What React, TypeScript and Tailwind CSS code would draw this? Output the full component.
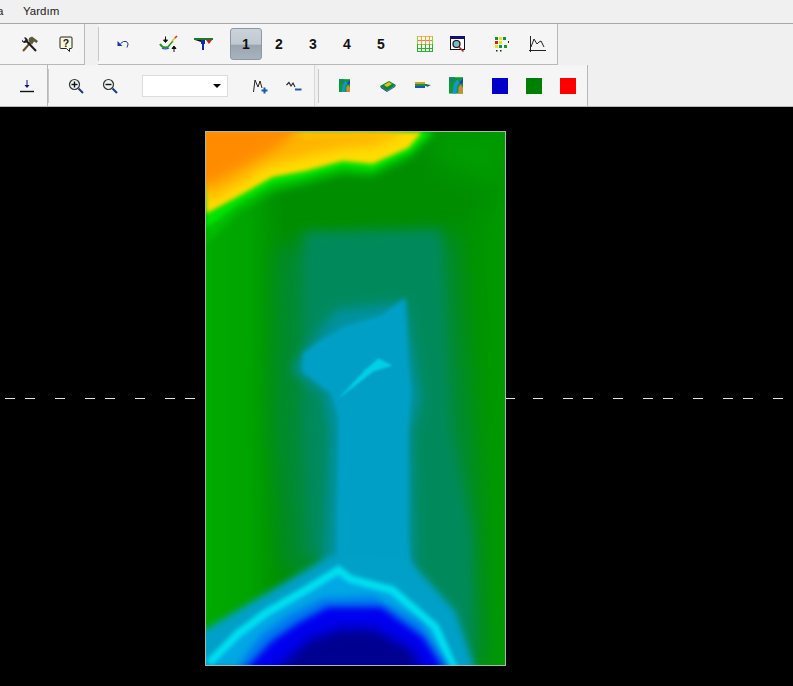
import React from 'react';

const HammerIcon = () => (
  <svg width="18" height="16" viewBox="0 0 18 16" fill="none">
    <path d="M2 15 L9.5 6.5" stroke="#6a4a22" strokeWidth="2" />
    <path d="M8 2 L11 0.5 L17 5 L15.5 7 L13 5.5 L11 8.5 L7.5 5 Z" fill="#5c5a3a" />
    <path d="M15 15 L5.5 5" stroke="#1c1c1c" strokeWidth="2" />
    <path d="M1 3.5 L2.5 5.5 L4.5 4 L3 1.5 L5 1.5 L7 4 L5.5 6.5 L3 7 L1 5.5 Z" fill="#1c1c1c" />
  </svg>
);

const HelpIcon = () => (
  <svg width="14" height="17" viewBox="0 0 14 17" fill="none">
    <path d="M2 1 H12 Q13 1 13 2 V11.5 Q13 12.5 12 12.5 H10.5 V15.5 L7.5 12.5 H2 Q1 12.5 1 11.5 V2 Q1 1 2 1 Z" fill="#fbf7dc" stroke="#222" strokeWidth="1" />
    <text x="7" y="10.5" textAnchor="middle" fontSize="10.5" fontWeight="700" fontFamily="Liberation Sans, sans-serif" fill="#222">?</text>
  </svg>
);

const UndoIcon = () => (
  <svg width="13" height="9" viewBox="0 0 13 9" fill="none">
    <path d="M0.5 1 V6 H5.5 Z" fill="#1a3a9a" />
    <path d="M3.5 3.5 Q6.5 0.5 9.5 1.5 Q12.5 3.5 10 7.5" stroke="#1a3a9a" strokeWidth="1" />
  </svg>
);

const ProfileUpIcon = () => (
  <svg width="20" height="18" viewBox="0 0 20 18" fill="none">
    <path d="M1 9 Q4 14 9 12" stroke="#1f9a1f" strokeWidth="2" />
    <path d="M9 12 Q12 8 14 6" stroke="#1f9a1f" strokeWidth="1.5" />
    <path d="M13 6 L17 2" stroke="#e8c020" strokeWidth="1.6" />
    <path d="M16 3 L18 1" stroke="#e03020" strokeWidth="1.6" />
    <path d="M3 13 Q6 15 10 13" stroke="#2040c0" strokeWidth="1.2" />
    <path d="M6.5 1.5 V5 M4.5 5 H8.5 L6.5 7.5 Z" fill="#111" stroke="#111" />
    <path d="M15 17 V13 M13 13.5 H17 L15 11 Z" fill="#111" stroke="#111" />
  </svg>
);

const SectionIcon = () => (
  <svg width="20" height="14" viewBox="0 0 20 14" fill="none">
    <path d="M0 1 H19 V3 H0 Z" fill="#1e7a2a" />
    <path d="M7 3 H11 V7 H10 V13 H8 V7 H7 Z" fill="#1228a8" />
    <path d="M12 3 H18 L15 7 Z" fill="#c02020" />
    <path d="M1 3 H7 L7 5 Z" fill="#111" />
  </svg>
);

const GridIcon = () => (
  <svg width="16" height="16" viewBox="0 0 16 16" fill="none" shapeRendering="crispEdges">
    <path d="M0 0.5 H16" stroke="#f0c040" />
    <path d="M0 4.5 H16" stroke="#f08040" />
    <path d="M0 8.5 H16" stroke="#a0d040" />
    <path d="M0 12.5 H16" stroke="#30b030" />
    <path d="M0 15.5 H16" stroke="#30b030" />
    <path d="M0.5 8 V16 M4.5 8 V16 M8.5 8 V16 M12.5 8 V16 M15.5 8 V16" stroke="#30b030" />
    <path d="M0.5 0 V8 M15.5 0 V8" stroke="#90d040" />
    <path d="M4.5 0 V8 M8.5 0 V8 M12.5 0 V8" stroke="#f0a040" />
  </svg>
);

const WindowSearchIcon = () => (
  <svg width="16" height="16" viewBox="0 0 16 16" fill="none">
    <rect x="0.5" y="0.5" width="14" height="13" fill="#fff" stroke="#111" />
    <rect x="0" y="0" width="15" height="3" fill="#10107a" />
    <circle cx="6.5" cy="8" r="3.5" fill="#80b8c8" stroke="#111" strokeWidth="1.2" />
    <path d="M9 11 L13.5 15.5" stroke="#c02030" strokeWidth="1.6" />
  </svg>
);

const DotsIcon = () => (
  <svg width="15" height="16" viewBox="0 0 15 16">
    <rect x="0" y="1" width="3" height="3" fill="#0a9a30" />
    <rect x="4" y="1" width="3" height="3" fill="#e8e020" />
    <rect x="8" y="1" width="3" height="3" fill="#0a9a30" />
    <rect x="0" y="5" width="3" height="3" fill="#d02020" />
    <rect x="4" y="5" width="3" height="3" fill="#e8e020" />
    <rect x="9" y="9" width="3" height="3" fill="#0a9a30" />
    <rect x="0" y="9" width="3" height="3" fill="#e8e020" />
    <rect x="4" y="9" width="3" height="3" fill="#0a9a30" />
    <rect x="13" y="5" width="1" height="2" fill="#222" />
    <rect x="1" y="14" width="1.5" height="1.5" fill="#222" />
    <rect x="5" y="14" width="1.5" height="1.5" fill="#222" />
  </svg>
);

const ChartIcon = () => (
  <svg width="17" height="17" viewBox="0 0 17 17" fill="none" stroke="#222" strokeWidth="1">
    <path d="M1.5 0 V16 M0 14.5 H17" />
    <path d="M2 11 L5 3 L8 8 L10 6 L12 5 L15 11" />
  </svg>
);

const DownLineIcon = () => (
  <svg width="16" height="16" viewBox="0 0 16 16" fill="none">
    <path d="M8 2 V8" stroke="#10107a" strokeWidth="1" />
    <path d="M5.5 7 H10.5 L8 10 Z" fill="#10107a" />
    <path d="M1 13.5 H15" stroke="#111" strokeWidth="1.4" />
  </svg>
);

const ZoomIcon = ({ plus }: { plus?: boolean }) => (
  <svg width="16" height="16" viewBox="0 0 16 16" fill="none">
    <circle cx="6.5" cy="6.5" r="5" fill="#eef4f4" stroke="#333" strokeWidth="1.2" />
    <path d="M3.5 6.5 H9.5" stroke="#111" strokeWidth="1.4" />
    {plus && <path d="M6.5 3.5 V9.5" stroke="#111" strokeWidth="1.4" />}
    <path d="M10.5 10.5 L15 15" stroke="#1a3a7a" strokeWidth="2" />
  </svg>
);

const PeakPlusIcon = () => (
  <svg width="16" height="16" viewBox="0 0 16 16" fill="none">
    <path d="M1.5 14 L3 2 L6 9 L8 3 L10 10" stroke="#222" strokeWidth="1" />
    <path d="M9.5 12.5 H15.5 M12.5 9.5 V15.5" stroke="#1a5aa8" strokeWidth="2" />
  </svg>
);

const PeakMinusIcon = () => (
  <svg width="16" height="12" viewBox="0 0 16 12" fill="none">
    <path d="M0.5 5 L3 2.5 L5 6 L7 3 L9 7" stroke="#222" strokeWidth="1.1" />
    <path d="M9 9.5 H15.5" stroke="#1a5aa8" strokeWidth="2" />
  </svg>
);

const MapIcon = ({ size }: { size: number }) => (
  <svg width={size} height={size * 1.2} viewBox="0 0 12 14">
    <rect width="12" height="14" fill="#0a9a30" />
    <rect x="0" y="0" width="5" height="4" fill="#108860" />
    <path d="M3 14 L4 6 L7 2 L9 4 L7 8 L6.5 14 Z" fill="#1a90d8" />
    <path d="M8 14 L8 9 L10 6 L12 9 L12 14 Z" fill="#c89030" />
    <path d="M9 4 L12 1 L12 5 L10 6 Z" fill="#2040c0" />
  </svg>
);

const SurfaceIcon = () => (
  <svg width="16" height="12" viewBox="0 0 16 12">
    <path d="M0 6 L9 1 L16 5 L7 11 Z" fill="#0a8a30" />
    <path d="M4 5 L9 2 L12 4 L7 7 Z" fill="#e0c020" />
    <path d="M0 6 L7 11 L7 12 L1 8 Z" fill="#10309a" />
    <path d="M7 11 L16 5 L15 7 L7 12 Z" fill="#1a60b0" />
  </svg>
);

const SliceIcon = () => (
  <svg width="16" height="7" viewBox="0 0 16 7">
    <rect x="0" y="0" width="10" height="2" fill="#d0a020" />
    <rect x="0" y="2" width="12" height="2" fill="#0a9a30" />
    <rect x="0" y="4" width="10" height="2" fill="#1a50c0" />
    <path d="M10 2 L16 3 L12 5 Z" fill="#107060" />
  </svg>
);

// drawing of the surface, coordinates are relative to the plot
const HeatMap = () => (
  <svg className="block h-full w-full" viewBox="0 0 300 534" preserveAspectRatio="none">
    <defs>
      <filter id="b1" x="-20%" y="-20%" width="140%" height="140%"><feGaussianBlur stdDeviation="1.2" /></filter>
      <filter id="b2" x="-20%" y="-20%" width="140%" height="140%"><feGaussianBlur stdDeviation="2.2" /></filter>
      <filter id="b3" x="-20%" y="-20%" width="140%" height="140%"><feGaussianBlur stdDeviation="3.5" /></filter>
      <filter id="b6" x="-20%" y="-20%" width="140%" height="140%"><feGaussianBlur stdDeviation="6" /></filter>
      <filter id="b10" x="-30%" y="-30%" width="160%" height="160%"><feGaussianBlur stdDeviation="11" /></filter>
      <linearGradient id="leftGreen" x1="0" x2="1" y1="0" y2="0">
        <stop offset="0" stopColor="#00aa00" />
        <stop offset="0.14" stopColor="#00a400" />
        <stop offset="0.26" stopColor="#008e00" />
        <stop offset="0.8" stopColor="#008c08" />
        <stop offset="0.9" stopColor="#009400" />
        <stop offset="1" stopColor="#009a00" />
      </linearGradient>
    </defs>
    <rect width="300" height="534" fill="url(#leftGreen)" />
    {/* top of the green field */}
    <path d="M70 60 L300 0 L300 60 L260 90 L90 100 Z" fill="#008e00" filter="url(#b10)" />
    <path d="M225 0 L300 0 L300 60 L230 30 Z" fill="#009c00" filter="url(#b10)" />
    {/* teal zone */}
    <path d="M72 115 L250 105 L268 300 L282 534 L200 534 L120 440 L80 440 L68 300 Z" fill="#008a34" filter="url(#b10)" />
    <path d="M98 100 L236 98 L246 300 L266 400 L268 534 L210 534 L133 440 L102 420 L97 300 Z" fill="#008a5c" filter="url(#b6)" />
    {/* bright band under the orange zone */}
    <path d="M0 112 L33 80 L67 60 L100 52 L137 42 L167 44 L205 26 L232 0 L0 0 Z" fill="#00c000" filter="url(#b3)" />
    <path d="M0 96 L33 72 L67 52 L100 45 L137 35 L167 38 L205 20 L226 0 L0 0 Z" fill="#00e400" filter="url(#b2)" />
    <path d="M0 82 L33 64 L67 45 L100 39 L137 29 L167 32 L203 16 L217 0 L0 0 Z" fill="#ffdc00" filter="url(#b2)" />
    <path d="M0 70 L33 52 L60 34 L100 24 L137 16 L165 14 L190 6 L198 0 L0 0 Z" fill="#ffb400" filter="url(#b6)" />
    <path d="M-10 60 L35 36 L65 20 L92 0 L92 -10 L-10 -10 Z" fill="#ff8c00" filter="url(#b6)" />
    {/* blue column */}
    <path d="M200 170 L216 268 L207 300 L209 440 L120 430 L124 300 L118 262 L86 238 L130 178 Z" fill="#0092a0" filter="url(#b6)" />
    <path d="M200 166 L175 184 L140 194 L115 209 L97 222 L97 240 L125 262 L133 285 L131 402 L131 440 L206 450 L203 400 L203 299 L206 260 L203 230 Z" fill="#00a0c6" filter="url(#b2)" />
    <path d="M133 267 L160 238 L173 227 L187 234 L168 240 Z" fill="#00cfe4" filter="url(#b1)" />
    {/* cool zone at the bottom */}
    <path d="M-10 504 L125 424 L205 430 L250 480 L272 544 L-10 544 Z" fill="#00a0c8" filter="url(#b3)" />
    <path d="M3 532 L33 502 L60 482 L100 459 L133 439 L145 448 L187 459 L230 496 L250 540 Z" fill="#00a8e4" />
    <path d="M3 532 L33 502 L60 482 L100 459 L133 439 L145 448 L187 459 L230 496 L250 540" fill="none" stroke="#00e0f0" strokeWidth="8" filter="url(#b2)" />
    <path d="M28 540 L55 504 L83 484 L117 467 L168 465 L215 492 L246 540 Z" fill="#0078f0" filter="url(#b3)" />
    <path d="M38 540 L66 510 L92 492 L122 476 L176 476 L218 506 L240 540 Z" fill="#0000f0" filter="url(#b3)" />
    <path d="M68 540 L105 508 L135 498 L168 498 L205 518 L218 540 Z" fill="#000090" filter="url(#b6)" />
  </svg>
);

const Dashes = ({ className }: { className: string }) => (
  <div className={`h-px bg-[repeating-linear-gradient(to_right,#e0e0e0_0,#e0e0e0_10px,transparent_10px,transparent_20px,#e0e0e0_20px,#e0e0e0_30px,transparent_30px,transparent_50px,#e0e0e0_50px,#e0e0e0_60px,transparent_60px,transparent_80px)] ${className}`} />
);

const Digit = ({ n, className }: { n: number; className: string }) => (
  <span className={`text-center text-[14px] font-bold leading-none text-[#111] ${className}`}>{n}</span>
);

const ColorSquare = ({ className }: { className: string }) => (
  <span className={`h-4 w-4 ${className}`} />
);

export default function App() {
  return (
    <div className="flex h-[686px] w-[793px] flex-col overflow-hidden bg-black font-['Liberation_Sans',sans-serif]">
      {/* menu */}
      <div className="flex h-[24px] shrink-0 items-center gap-[20px] border-b border-[#a8a8a8] bg-[#f0f0f0] text-[11.5px] text-[#222]">
        <span className="-ml-[3px] w-[6px]">a</span>
        <span>Yardım</span>
      </div>

      {/* first toolbar row */}
      <div className="flex h-[41px] shrink-0 bg-[#f0f0f0]">
        <div className="flex w-[85px] items-center border-r border-b border-[#b8b8b8] bg-[#f5f5f5] pl-[21px]">
          <HammerIcon />
          <span className="ml-[20px] flex"><HelpIcon /></span>
        </div>
        <div className="ml-[13px] flex w-[460px] items-center border-r border-b border-[#b8b8b8] bg-[#f5f5f5]">
          <span className="h-[34px] w-px bg-[#c8c8c8]" />
          <span className="ml-[18px] flex"><UndoIcon /></span>
          <span className="ml-[29px] flex"><ProfileUpIcon /></span>
          <span className="ml-[15px] flex"><SectionIcon /></span>
          <span className="ml-[16px] flex h-[32px] w-[32px] items-center justify-center rounded-[3px] border border-[#8c98a4] bg-[linear-gradient(to_bottom,#ccd3da_0%,#c0c8d0_50%,#99a5b1_55%,#a9b3bd_100%)] text-[14px] font-bold text-[#111]">1</span>
          <Digit n={2} className="ml-[8px] w-[18px]" />
          <Digit n={3} className="ml-[16px] w-[18px]" />
          <Digit n={4} className="ml-[16px] w-[18px]" />
          <Digit n={5} className="ml-[16px] w-[18px]" />
          <span className="ml-[27px] flex"><GridIcon /></span>
          <span className="ml-[17px] flex"><WindowSearchIcon /></span>
          <span className="ml-[29px] flex"><DotsIcon /></span>
          <span className="ml-[19px] flex"><ChartIcon /></span>
        </div>
      </div>

      {/* second toolbar row */}
      <div className="flex h-[42px] shrink-0 border-b border-[#b8b8b8] bg-[#f0f0f0]">
        <div className="flex w-[48px] items-center border-r border-[#b8b8b8] bg-[#f5f5f5] pl-[19px]">
          <DownLineIcon />
        </div>
        <div className="flex w-[267px] items-center border-r border-[#d8d8d8] bg-[#f5f5f5]">
          <span className="h-[34px] w-px bg-[#c8c8c8]" />
          <span className="ml-[19px] flex"><ZoomIcon plus /></span>
          <span className="ml-[18px] flex"><ZoomIcon /></span>
          <div className="ml-[24px] flex h-[22px] w-[86px] items-center justify-end border border-[#dcdcdc] bg-white pr-[6px]">
            <span className="h-0 w-0 border-x-[4px] border-t-[4px] border-x-transparent border-t-black" />
          </div>
          <span className="ml-[24px] flex"><PeakPlusIcon /></span>
          <span className="ml-[18px] flex"><PeakMinusIcon /></span>
        </div>
        <div className="ml-[3px] flex w-[270px] items-center border-r border-[#b8b8b8] bg-[#f5f5f5]">
          <span className="h-[34px] w-px bg-[#c8c8c8]" />
          <span className="ml-[20px] flex"><MapIcon size={11} /></span>
          <span className="ml-[30px] flex"><SurfaceIcon /></span>
          <span className="ml-[19px] flex"><SliceIcon /></span>
          <span className="ml-[18px] flex"><MapIcon size={14} /></span>
          <ColorSquare className="ml-[29px] bg-[#0000c8]" />
          <ColorSquare className="ml-[18px] bg-[#008000]" />
          <ColorSquare className="ml-[18px] bg-[#ff0000]" />
        </div>
      </div>

      {/* plot area */}
      <div className="flex flex-1 items-start pt-[24px]">
        <div className="mt-[267px] w-[205px] pl-[5px]">
          <Dashes className="w-[190px]" />
        </div>
        <div className="h-[535px] w-[301px] shrink-0 border border-[#a8b8a8] bg-black">
          <HeatMap />
        </div>
        <div className="mt-[267px] flex">
          <span className="h-px w-[9px] bg-[#e0e0e0]" />
          <span className="ml-[18px] h-px w-[10px] bg-[#e0e0e0]" />
          <Dashes className="ml-[20px] w-[220px]" />
        </div>
      </div>
    </div>
  );
}
